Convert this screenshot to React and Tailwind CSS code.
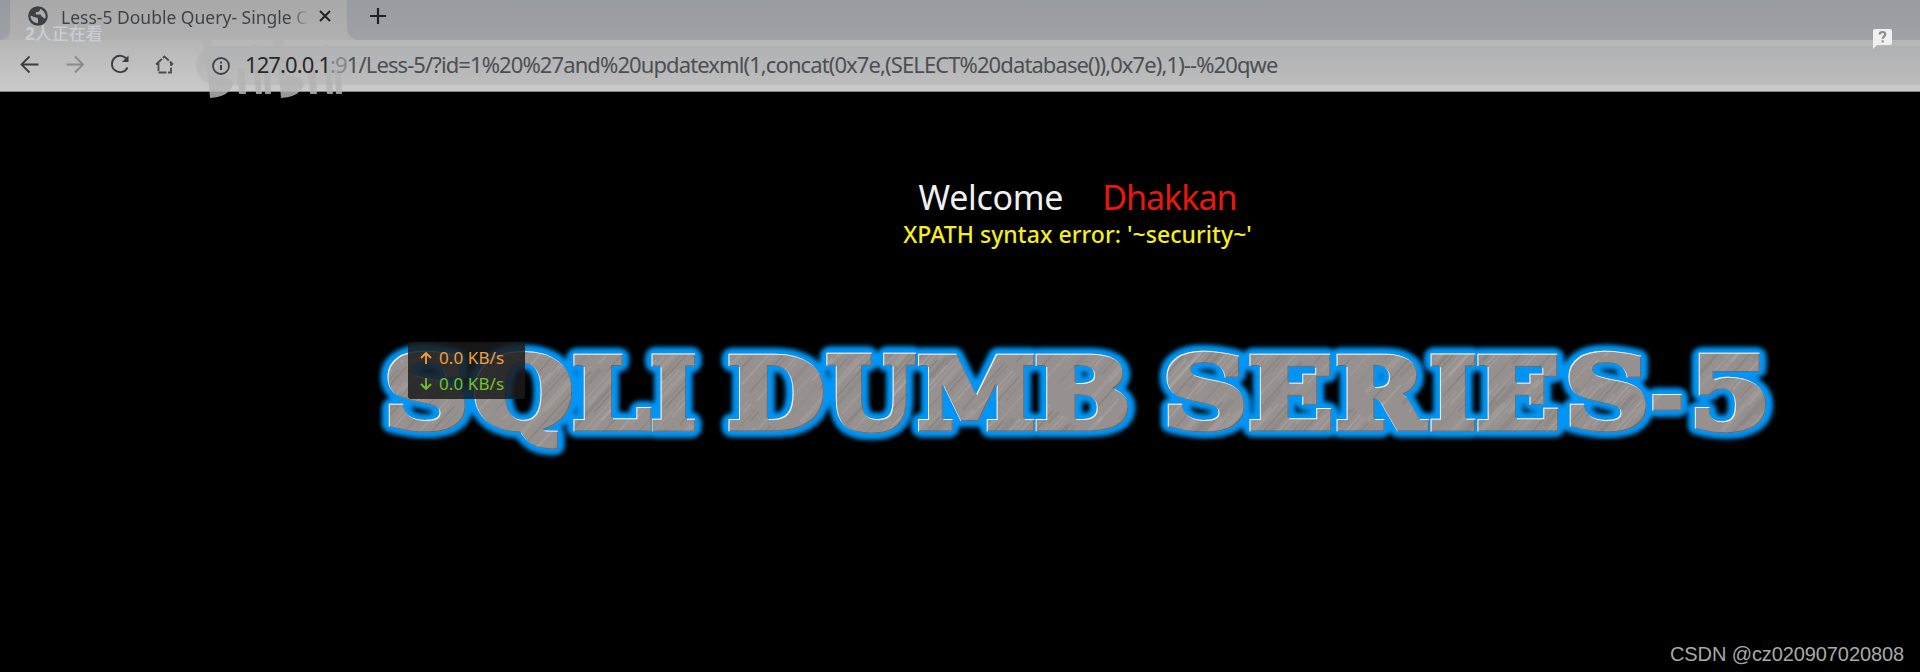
import { useMemo } from "react";

const BANNER = [
  { ch: "S", x: 387, y: 350, w: 79, h: 82 },
  { ch: "Q", x: 474, y: 350, w: 98, h: 99 },
  { ch: "L", x: 573, y: 353, w: 79, h: 78 },
  { ch: "I", x: 651, y: 353, w: 45, h: 78 },
  { ch: "D", x: 728, y: 353, w: 96, h: 78 },
  { ch: "U", x: 826, y: 353, w: 91, h: 80 },
  { ch: "M", x: 918, y: 353, w: 116, h: 78 },
  { ch: "B", x: 1035, y: 353, w: 93, h: 78 },
  { ch: "S", x: 1166, y: 350, w: 79, h: 82 },
  { ch: "E", x: 1249, y: 353, w: 83, h: 78 },
  { ch: "R", x: 1336, y: 353, w: 93, h: 78 },
  { ch: "I", x: 1430, y: 353, w: 46, h: 78 },
  { ch: "E", x: 1477, y: 353, w: 82, h: 78 },
  { ch: "S", x: 1568, y: 350, w: 79, h: 82 },
  { ch: "-", x: 1652, y: 393, w: 30, h: 17 },
  { ch: "5", x: 1695, y: 353, w: 72, h: 80 },
];

const STROKE = 7;

const SCRATCHES = Array.from({ length: 110 }, (_, i) => ({
  x: (i * 47) % 200,
  y: (i * 83) % 200,
  len: 25 + ((i * 29) % 80),
  h: i % 5 === 0 ? 4 : 1.3,
  light: i % 2 === 0,
  o: i % 5 === 0 ? 0.14 : 0.12 + ((i * 7) % 10) / 45,
}));

// fit each glyph's ink box into its slot, leaving room for the stroke
function fitGlyphs() {
  const ctx = document.createElement("canvas").getContext("2d");
  ctx.font = "bold 100px 'DejaVu Serif'";
  return BANNER.map(({ ch, x, y, w, h }) => {
    const m = ctx.measureText(ch);
    const pad = STROKE / 2;
    const sx = (w - pad * 2) / (m.actualBoundingBoxLeft + m.actualBoundingBoxRight);
    const sy = (h - pad * 2) / (m.actualBoundingBoxAscent + m.actualBoundingBoxDescent);
    const tx = x + pad + m.actualBoundingBoxLeft * sx;
    const ty = y + pad + m.actualBoundingBoxAscent * sy;
    return { ch, transform: `translate(${tx - 370} ${ty - 330}) scale(${sx} ${sy})` };
  });
}

function Letters({ glyphs, ...props }) {
  return (
    <g fontFamily="'DejaVu Serif', serif" fontWeight="bold" fontSize="100" {...props}>
      {glyphs.map((g, i) => (
        <text key={i} transform={g.transform} vectorEffect="non-scaling-stroke">{g.ch}</text>
      ))}
    </g>
  );
}

function Banner() {
  const glyphs = useMemo(fitGlyphs, []);
  return (
    <svg width="1420" height="140" viewBox="0 0 1420 140" className="block">
      <defs>
        <pattern id="metal" width="200" height="200" patternUnits="userSpaceOnUse" patternTransform="rotate(-48)">
          <rect width="200" height="200" fill="#96918e" />
          {SCRATCHES.map((s, i) => (
            <rect key={i} x={s.x} y={s.y} width={s.len} height={s.h} fill={s.light ? "#cfcbc8" : "#5e5a58"} opacity={s.o} />
          ))}
        </pattern>
        <filter id="glow" x="-5%" y="-30%" width="110%" height="160%"><feGaussianBlur stdDeviation="2" /></filter>
        <filter id="bevel" x="-5%" y="-30%" width="110%" height="160%">
          <feOffset in="SourceAlpha" dx="1.4" dy="1.4" result="in1" />
          <feComposite in="SourceAlpha" in2="in1" operator="out" result="edge" />
          <feFlood floodColor="#e8f4fb" />
          <feComposite in2="edge" operator="in" result="light" />
          <feOffset in="SourceAlpha" dx="-1" dy="-1" result="in2" />
          <feComposite in="SourceAlpha" in2="in2" operator="out" result="edge2" />
          <feFlood floodColor="#4b5560" floodOpacity="0.7" />
          <feComposite in2="edge2" operator="in" result="dark" />
          <feMerge>
            <feMergeNode in="SourceGraphic" />
            <feMergeNode in="dark" />
            <feMergeNode in="light" />
          </feMerge>
        </filter>
        <mask id="ink" maskUnits="userSpaceOnUse" x="0" y="0" width="1420" height="140">
          <Letters glyphs={glyphs} fill="#fff" stroke="#fff" strokeWidth={STROKE} strokeLinejoin="miter" strokeMiterlimit="2" />
        </mask>
      </defs>
      <g filter="url(#glow)"><Letters glyphs={glyphs} fill="#0095f6" stroke="#0095f6" strokeWidth={STROKE + 13} strokeLinejoin="round" /></g>
      <g filter="url(#bevel)">
        <rect width="1420" height="140" fill="url(#metal)" mask="url(#ink)" />
      </g>
    </svg>
  );
}

function GlobeIcon() {
  return (
    <svg width="20" height="20" viewBox="0 0 20 20">
      <circle cx="10" cy="10" r="9.8" fill="#3c3f43" />
      <path d="M2.5 9.5 6 11l2 .5c1.500 0 2 .8 2 2v3.700C5.500 17 2.500 14 2.500 9.500ZM12 3c0 2-1 3-3 3-1.500 0-1.500 2-1 2.500h4c1 0 1.500 2 2.500 2.500s1.500 1.500 3 1.500c1-4-1.500-8.300-5.500-9.500Z" fill="#adadad" />
    </svg>
  );
}

function NavIcons() {
  return (
    <div className="flex h-[40px] items-center">
      <svg width="180" height="40" viewBox="0 0 180 40" fill="none" stroke="#3b3d40" strokeWidth="1.8">
        <path d="M38.500 18.500H21.500M29.500 10.500l-8 8 8 8" />
        <path d="M66.500 18.500h16.500M75 10.500l8 8-8 8" stroke="#898a8b" />
        <path d="M127 13.500a8.200 8.200 0 1 0 .500 8" />
        <path d="M128.500 9.500v6.500h-6.500Z" fill="#3b3d40" stroke="none" />
        <path d="M156 18.500l8.500-8 8.500 8M158.500 17v9.500h12.500V17" stroke="#4a4c4f" strokeDasharray="8 1.5" />
      </svg>
    </div>
  );
}

function TabBar() {
  return (
    <div className="flex h-[40px] bg-linear-to-b from-[#989ba0] to-[#a1a2a7]">
      <div className="w-[10px] bg-[#adadae]"><div className="h-full rounded-br-[10px] bg-linear-to-b from-[#96999e] to-[#a0a1a6]" /></div>
      <div className="flex w-[337px] items-center bg-linear-to-b from-[#a8a8a8] to-[#b1b1b2] pb-2 pl-[18px]">
        <GlobeIcon />
        <span className="mt-[2px] ml-[13px] w-[248px] bg-linear-to-r from-[#3e4145] from-92% to-[#adadad] bg-clip-text text-[17.5px] whitespace-nowrap text-transparent">Less-5 Double Query- Single C</span>
        <svg width="12" height="12" viewBox="0 0 12 12" className="ml-[10px]" stroke="#222" strokeWidth="2"><path d="M1 1l10 10M11 1L1 11" /></svg>
      </div>
      <div className="flex-1 bg-[#b0b0b1]">
        <div className="h-full rounded-bl-[12px] bg-linear-to-b from-[#989ba0] to-[#a1a2a7] pt-2 pl-[23px]">
          <svg width="16" height="16" viewBox="0 0 16 16" stroke="#1f2123" strokeWidth="2.200"><path d="M8 0v16M0 8h16" /></svg>
        </div>
      </div>
    </div>
  );
}

function Watermark() {
  return (
    <svg width="144" height="64" viewBox="0 0 144 64" className="absolute top-[-10px] left-[6px]" fill="#b3b3b3" opacity="0.85">
      <g id="bili">
        <path d="M0 5 10 1 13 38 28 43q6 5-1 12Q22 61 8 62L6 38Z" />
        <path d="M35 32h7l2 26h-7ZM49 8h6l5 50h-6ZM62 32h6l1 26h-6Z" />
      </g>
      <use href="#bili" x="71" />
    </svg>
  );
}

function Toolbar() {
  return (
    <div className="flex h-[52px] border-b border-[#858585] bg-linear-to-b from-[#b6b6b6] to-[#cacaca] pt-[6px]">
      <NavIcons />
      <div className="relative ml-[16px] flex h-[39px] flex-1 items-center rounded-l-full bg-linear-to-b from-[#b0b1b3] to-[#bdbdbd] pl-[16px]">
        <Watermark />
        <svg width="18" height="18" viewBox="0 0 18 18" fill="none" stroke="#404346" strokeWidth="1.800" className="relative">
          <circle cx="9" cy="9" r="8" /><path d="M9 8v5M9 4.500v2" strokeWidth="2" />
        </svg>
        <span className="relative bottom-px ml-[15px] text-[22px] tracking-[-0.9px] whitespace-nowrap text-[#4b4f54]"><span className="text-[#26282b]">127.0.0.1</span><span className="text-[#85878a]">:9</span>1/Less-5/?id=1%20%27and%20updatexml(1,concat(0x7e,(SELECT%20database()),0x7e),1)--%20qwe</span>
      </div>
    </div>
  );
}

function SpeedMeter() {
  return (
    <div className="absolute top-[342px] left-[408px] h-[57px] w-[117px] rounded-[3px] bg-[#1b1b1c]/85 pt-[3px] pl-[12px] text-[17px] leading-[26px]">
      {[["#f0a03c", "M6 12V1M1 6l5-5 5 5"], ["#74c22e", "M6 0v11M1 6l5 5 5-5"]].map(([c, d]) => (
        <div key={c} className="flex items-center gap-[7px]" style={{ color: c }}>
          <svg width="12" height="12" viewBox="0 0 12 12" fill="none" stroke="currentColor" strokeWidth="1.800"><path d={d} /></svg>
          <span className="tracking-[0.1px]">0.0 KB/s</span>
        </div>
      ))}
    </div>
  );
}

export default function App() {
  return (
    <div className="relative h-[672px] w-[1920px] overflow-hidden bg-black font-['Noto_Sans',sans-serif]">
      <TabBar />
      <Toolbar />
      <div className="ml-[235px] flex flex-col items-center pt-[82px]">
        <h1 className="flex h-[47px] items-center gap-[39px] text-[34px] text-[#f0f0f0]"><span className="tracking-[-0.3px]">Welcome</span><span className="tracking-[-1px] text-[#e8190c]">Dhakkan</span></h1>
        <p className="h-[29px] text-[23px] leading-[26px] font-medium tracking-[0.05px] whitespace-nowrap text-[#f4ef1d]">XPATH syntax error: '~security~'</p>
      </div>
      <div className="mt-[80px] ml-[370px]"><Banner /></div>
      <SpeedMeter />
      <span className="absolute top-[22px] left-[25px] font-['Noto_Sans','Noto_Sans_CJK_SC',sans-serif] text-[17px] leading-[24px] font-bold text-[#c9cdd3]">2<span className="font-medium">人正在看</span></span>
      <svg width="20" height="20" viewBox="0 0 20 20" className="absolute top-[29px] left-[1872px]">
        <path d="M3 0h15q2 0 2 2v12q0 2-2 2H5L1 20V2Q1 0 3 0Z" fill="#f0f0f0" />
        <path d="M7.500 5.500q.3-2.500 3-2.500t2.800 2.300c0 2-2.600 2.100-2.600 4.500M9.700 12.400h2" fill="none" stroke="#8b8c8e" strokeWidth="2.200" />
      </svg>
      <span className="absolute right-[16px] bottom-[6px] font-['Liberation_Sans',sans-serif] text-[20px] leading-[24px] tracking-[-0.1px] text-[#a8a8a8]">CSDN @cz020907020808</span>
    </div>
  );
}
